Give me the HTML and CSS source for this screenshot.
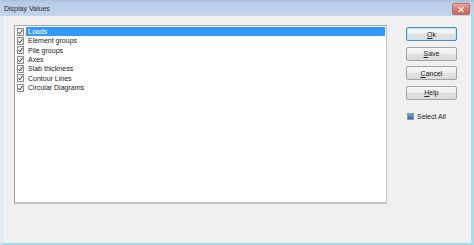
FILE: index.html
```html
<!DOCTYPE html>
<html lang="en">
<head>
    <meta charset="UTF-8">
    <title>Display Values</title>
    <link rel="stylesheet" href="styles.css">
</head>
<body>
    <div class="window">
        <div class="titlebar">
            <span class="title">Display Values</span>
            <span class="close-btn">
                <svg width="8" height="7" viewBox="0 0 8 7"><path d="M1.5 1 L6.5 6 M6.5 1 L1.5 6" stroke="#f4e8e8" stroke-width="1.5"/></svg>
            </span>
        </div>

        <div class="frame">
            <div class="listbox">
                <div class="item selected"><span class="check"><svg width="6" height="6" viewBox="0 0 6 6"><path d="M0.6 3.2 L2.2 5.2 L5.4 0.4" fill="none" stroke="#222" stroke-width="1.1"/></svg></span><span class="label">Loads</span></div>
                <div class="item"><span class="check"><svg width="6" height="6" viewBox="0 0 6 6"><path d="M0.6 3.2 L2.2 5.2 L5.4 0.4" fill="none" stroke="#222" stroke-width="1.1"/></svg></span><span class="label">Element groups</span></div>
                <div class="item"><span class="check"><svg width="6" height="6" viewBox="0 0 6 6"><path d="M0.6 3.2 L2.2 5.2 L5.4 0.4" fill="none" stroke="#222" stroke-width="1.1"/></svg></span><span class="label">Pile groups</span></div>
                <div class="item"><span class="check"><svg width="6" height="6" viewBox="0 0 6 6"><path d="M0.6 3.2 L2.2 5.2 L5.4 0.4" fill="none" stroke="#222" stroke-width="1.1"/></svg></span><span class="label">Axes</span></div>
                <div class="item"><span class="check"><svg width="6" height="6" viewBox="0 0 6 6"><path d="M0.6 3.2 L2.2 5.2 L5.4 0.4" fill="none" stroke="#222" stroke-width="1.1"/></svg></span><span class="label">Slab thickness</span></div>
                <div class="item"><span class="check"><svg width="6" height="6" viewBox="0 0 6 6"><path d="M0.6 3.2 L2.2 5.2 L5.4 0.4" fill="none" stroke="#222" stroke-width="1.1"/></svg></span><span class="label">Contour Lines</span></div>
                <div class="item"><span class="check"><svg width="6" height="6" viewBox="0 0 6 6"><path d="M0.6 3.2 L2.2 5.2 L5.4 0.4" fill="none" stroke="#222" stroke-width="1.1"/></svg></span><span class="label">Circular Diagrams</span></div>
            </div>

            <div class="side">
                <button class="btn default"><u>O</u>k</button>
                <button class="btn"><u>S</u>ave</button>
                <button class="btn"><u>C</u>ancel</button>
                <button class="btn"><u>H</u>elp</button>

                <div class="select-all">
                    <span class="box-filled"></span>
                    <span>Select All</span>
                </div>
            </div>
        </div>
    </div>
</body>
</html>
```

FILE: styles.css
```css
body {
    margin: 0;
    font-family: "Liberation Sans", Arial, sans-serif;
    font-size: 7px;
    color: #222;
    overflow: hidden;
}

.window {
    width: 474px;
    height: 245px;
    display: flex;
    flex-direction: column;
    background: #f0f0f0;
}

.titlebar {
    height: 16px;
    display: flex;
    align-items: center;
    background: linear-gradient(#a9c0dc 0, #b9cde6 20%, #c3d5eb 100%);
}
.title {
    padding-left: 4px;
    color: #1e2a38;
}
.close-btn {
    margin-left: auto;
    margin-right: 4px;
    margin-top: 2px;
    width: 18px;
    height: 12px;
    border-radius: 2px;
    border: 1px solid #b07070;
    box-sizing: border-box;
    background: linear-gradient(#e8aaa2, #d67a70 50%, #cc655a);
    display: flex;
    align-items: center;
    justify-content: center;
}

.frame {
    flex: 1;
    display: flex;
    align-items: flex-start;
    padding: 9px 0 0 11px;
    border-left: 3px solid #dfeaf5;
    border-right: 3px solid #a7deec;
    border-bottom: 2px solid #a2dbea;
}

.listbox {
    width: 373px;
    height: 179px;
    box-sizing: border-box;
    background: #fff;
    border: 1px solid #a6a6a6;
    border-right-color: #c4c4c4;
    border-bottom: 2px solid #c4c4c4;
    padding: 1px 1px 0 1px;
}
.item {
    height: 9.33px;
    display: flex;
    align-items: center;
}
.check {
    width: 7px;
    height: 8px;
    box-sizing: border-box;
    margin-left: 1px;
    border: 1px solid #8a8f96;
    background: linear-gradient(#e9edf2, #ffffff);
    display: flex;
    align-items: center;
    justify-content: center;
}
.label {
    margin-left: 2px;
    padding-left: 2px;
    height: 9px;
    line-height: 9px;
    flex: 1;
}
.item.selected .label {
    background: #3399ff;
    color: #fff;
}

.side {
    margin-left: 19px;
    padding-top: 2px;
    display: flex;
    flex-direction: column;
    gap: 5.5px;
}
.btn {
    width: 51px;
    height: 14px;
    margin: 0;
    padding: 0;
    font-family: "Liberation Sans", Arial, sans-serif;
    font-size: 7px;
    color: #222;
    border: 1px solid #a3a3a3;
    border-radius: 2px;
    background: linear-gradient(#f7f7f7, #eeeeee 50%, #e2e2e2 51%, #dadada);
}
.btn.default {
    border-color: #4a8cc0;
    box-shadow: inset 0 0 0 1px #c4e4f6;
}

.select-all {
    margin-top: 8px;
    padding-left: 1px;
    display: flex;
    align-items: center;
    gap: 3px;
}
.box-filled {
    width: 7px;
    height: 7px;
    box-sizing: border-box;
    border: 1px solid #8a9aa8;
    background: linear-gradient(#6ba3d6, #2f6fb0);
}
```
